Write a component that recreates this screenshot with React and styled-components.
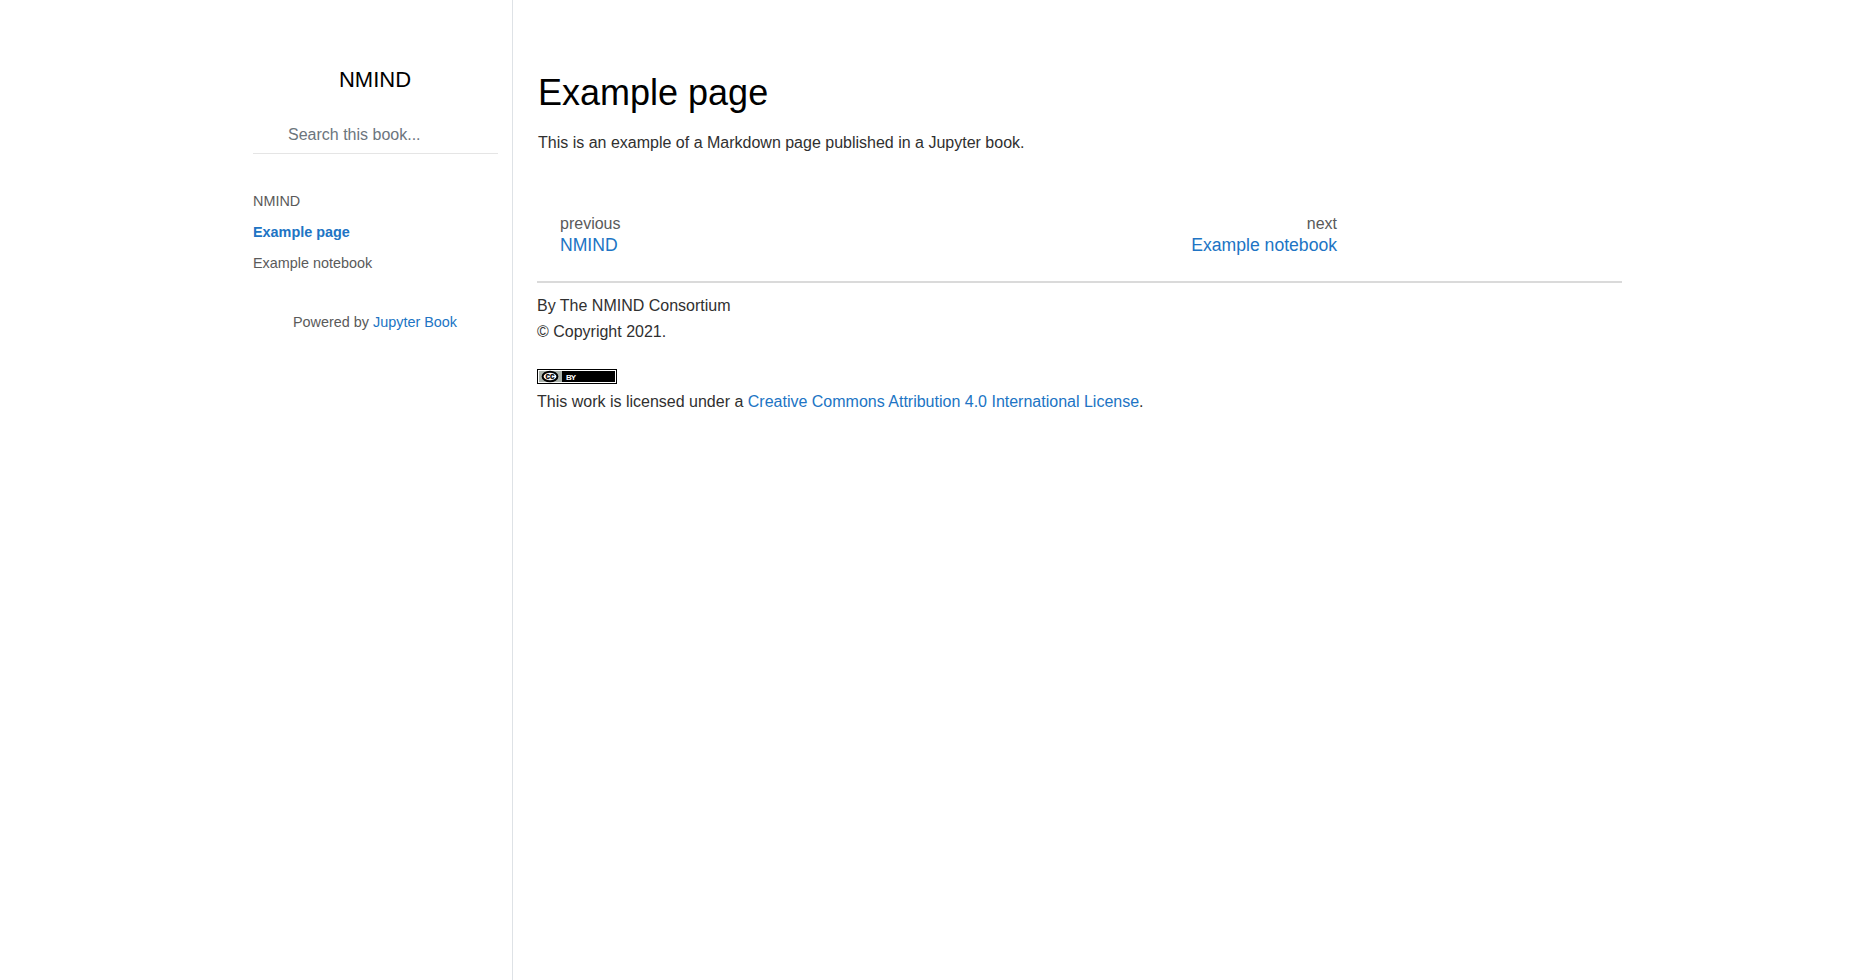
import styled, { createGlobalStyle } from "styled-components";

const GlobalStyle = createGlobalStyle`
html, body {
  margin: 0;
  padding: 0;
  background: #fff;
  font-family: "Liberation Sans", Arial, sans-serif;
  font-size: 16px;
  color: #303030;
}
* { box-sizing: border-box; }
a { color: #2074c4; text-decoration: none; }
`;

const Page = styled.div`
display: flex;
height: 980px;
padding-left: 238px;
overflow: hidden;
`;

const Sidebar = styled.aside`
width: 275px;
height: 100%;
padding: 67px 15px 0;
border-right: 1px solid #dee2e6;
`;

const Brand = styled.h1`
margin: 0;
font-size: 22px;
line-height: 26px;
font-weight: 400;
color: #000;
text-align: center;
`;

const SearchInput = styled.input`
display: block;
width: 245px;
height: 47px;
margin-top: 14px;
padding: 9px 0 0 35px;
border: none;
border-bottom: 1px solid #e5e5e5;
outline: none;
font-family: inherit;
font-size: 16px;
color: #495057;
&::placeholder { color: #6c757d; opacity: 1; }
`;

const Toc = styled.ul`
list-style: none;
margin: 32px 0 0;
padding: 0;
`;

const TocLink = styled.a`
display: block;
height: 31px;
line-height: 31px;
font-size: 14.4px;
color: ${(p) => (p.$active ? "#2074c4" : "#5a5a5a")};
font-weight: ${(p) => (p.$active ? 700 : 400)};
`;

const Powered = styled.p`
margin: 32px 0 0;
font-size: 14.4px;
line-height: 22px;
color: #5a5a5a;
text-align: center;
width: 244px;
`;

const Main = styled.main`
width: 1109px;
padding: 0 0 0 24px;
`;

const Article = styled.article`
padding: 73px 0 0 1px;
`;

const Title = styled.h1`
margin: 0;
font-size: 36px;
line-height: 40px;
font-weight: 400;
color: #000;
`;

const Para = styled.p`
margin: 18px 0 0;
line-height: 24px;
`;

const PrevNext = styled.nav`
display: flex;
justify-content: space-between;
width: 799px;
margin-top: 59px;
padding: 0 0 0 22px;
`;

const PrevNextItem = styled.div`
display: flex;
flex-direction: column;
text-align: ${(p) => (p.$right ? "right" : "left")};
`;

const PrevNextLabel = styled.span`
font-size: 16px;
line-height: 20px;
color: #5a5a5a;
`;

const PrevNextTitle = styled.a`
font-size: 17.6px;
line-height: 23px;
`;

const Footer = styled.footer`
margin-top: 24px;
border-top: 2px solid #dadada;
padding-top: 10px;
`;

const FootLine = styled.div`
line-height: 26px;
`;

const Badge = styled.svg`
display: block;
margin-top: 24px;
`;

const License = styled.div`
margin-top: 6px;
line-height: 24px;
`;

function CcBadge() {
  return (
    <Badge width="80" height="15" viewBox="0 0 80 15">
      <rect x="0.5" y="0.5" width="79" height="14" fill="#fff" stroke="#000" />
      <rect x="2" y="2" width="76" height="11" fill="#000" />
      <rect x="2" y="2" width="23" height="11" fill="#aab2ab" />
      <ellipse cx="13" cy="7.5" rx="7.4" ry="4.8" fill="#fff" stroke="#000" strokeWidth="2" />
      <text x="13" y="10.2" textAnchor="middle" fontFamily="Liberation Sans" fontWeight="700" fontSize="9" textLength="9" lengthAdjust="spacingAndGlyphs" stroke="#000" strokeWidth="0.3" fill="#000">cc</text>
      <text x="29" y="10.5" fontFamily="Liberation Sans" fontWeight="700" fontSize="8" textLength="10" fill="#fff">BY</text>
    </Badge>
  );
}

export default function App() {
  return (
    <Page>
      <GlobalStyle />
      <Sidebar>
        <Brand>NMIND</Brand>
        <SearchInput placeholder="Search this book..." />
        <Toc>
          <li><TocLink href="#">NMIND</TocLink></li>
          <li><TocLink href="#" $active>Example page</TocLink></li>
          <li><TocLink href="#">Example notebook</TocLink></li>
        </Toc>
        <Powered>Powered by <a href="#">Jupyter Book</a></Powered>
      </Sidebar>
      <Main>
        <Article>
          <Title>Example page</Title>
          <Para>This is an example of a Markdown page published in a Jupyter book.</Para>
          <PrevNext>
            <PrevNextItem>
              <PrevNextLabel>previous</PrevNextLabel>
              <PrevNextTitle href="#">NMIND</PrevNextTitle>
            </PrevNextItem>
            <PrevNextItem $right>
              <PrevNextLabel>next</PrevNextLabel>
              <PrevNextTitle href="#">Example notebook</PrevNextTitle>
            </PrevNextItem>
          </PrevNext>
        </Article>
        <Footer>
          <FootLine>By The NMIND Consortium</FootLine>
          <FootLine>© Copyright 2021.</FootLine>
          <CcBadge />
          <License>
            This work is licensed under a <a href="#">Creative Commons Attribution 4.0 International License</a>.
          </License>
        </Footer>
      </Main>
    </Page>
  );
}
